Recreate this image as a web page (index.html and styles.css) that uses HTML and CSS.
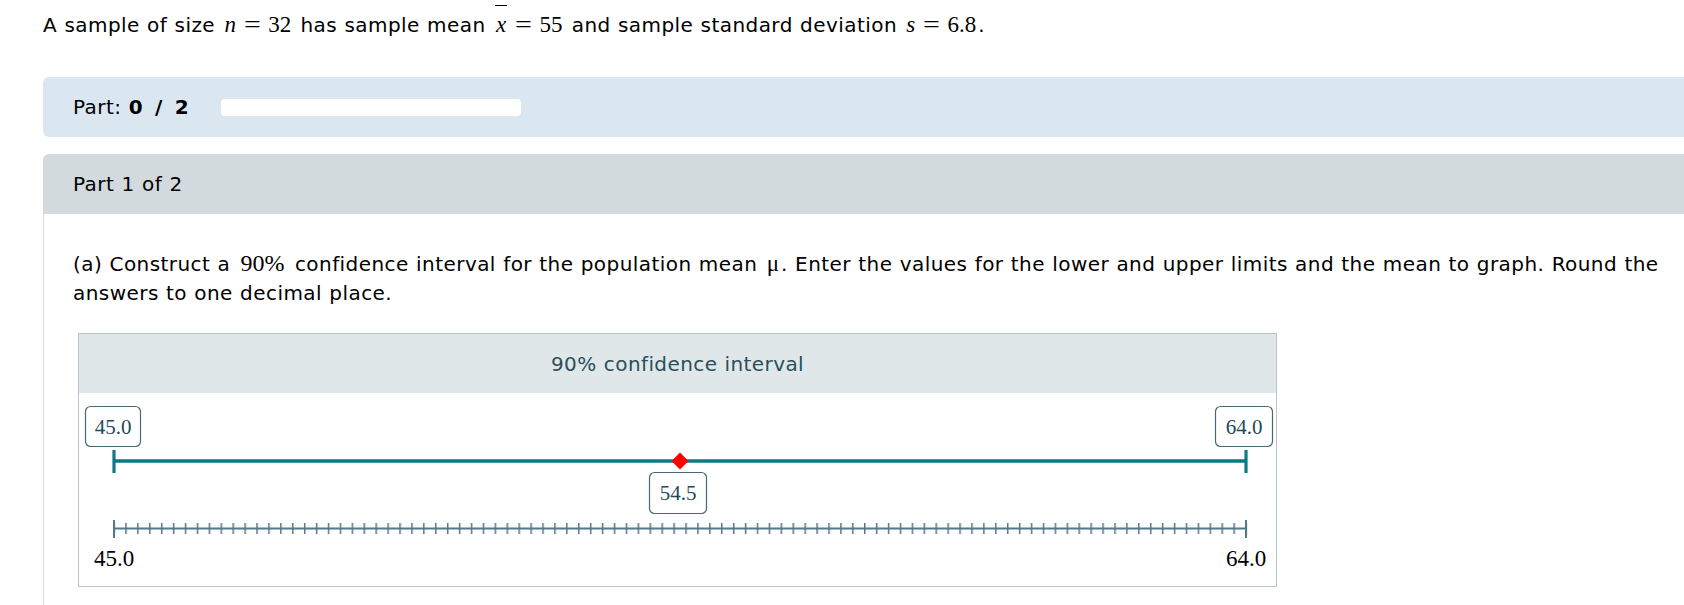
FILE: index.html
```html
<!DOCTYPE html>
<html lang="en">
<head>
<meta charset="utf-8">
<title>Confidence interval</title>
<link rel="stylesheet" href="styles.css">
</head>
<body>
<p class="problem">A sample of size <span class="m"><i>n</i><span class="eq">=</span>32</span> has sample mean <span class="m"><i class="bar">x</i><span class="eq">=</span>55</span> and sample standard deviation <span class="m"><i>s</i><span class="eq">=</span>6.8</span>.</p>

<div class="progress">
  <span class="progress-label">Part: <b>0 / 2</b></span>
  <span class="progress-track"></span>
</div>

<section class="part">
  <div class="part-header">Part 1 of 2</div>
  <div class="part-body">
    <p class="question">(a) Construct a <span class="m pct">90%</span> confidence interval for the population mean <span class="mu">μ</span>. Enter the values for the lower and upper limits and the mean to graph. Round the answers to one decimal place.</p>

    <div class="graph">
      <div class="graph-title">90% confidence interval</div>
      <svg class="graph-plot" width="1197" height="193" viewBox="0 0 1197 193">
        <defs>
          <pattern id="ticks" x="34.3" y="130" width="11.9158" height="11" patternUnits="userSpaceOnUse">
            <rect x="0" y="0" width="1.5" height="11" fill="#52788a"/>
          </pattern>
        </defs>
        <line x1="35" y1="68" x2="1167" y2="68" stroke="#0f7888" stroke-width="3.5"/>
        <line x1="35" y1="57" x2="35" y2="80" stroke="#0f7888" stroke-width="3.2"/>
        <line x1="1167" y1="57" x2="1167" y2="80" stroke="#0f7888" stroke-width="3.2"/>
        <polygon points="601,59.5 609.5,68 601,76.5 592.5,68" fill="#ff0000"/>
        <rect x="6.5" y="13.5" width="55" height="40" rx="5" fill="#fff" stroke="#456a77" stroke-width="1.2"/>
        <text x="34" y="41" class="box-text" text-anchor="middle">45.0</text>
        <rect x="1136.5" y="13.5" width="57" height="40" rx="5" fill="#fff" stroke="#456a77" stroke-width="1.2"/>
        <text x="1165" y="41" class="box-text" text-anchor="middle">64.0</text>
        <rect x="570.5" y="79.5" width="57" height="41" rx="5" fill="#fff" stroke="#456a77" stroke-width="1.2"/>
        <text x="599" y="107" class="box-text" text-anchor="middle">54.5</text>
        <line x1="35" y1="135.5" x2="1167" y2="135.5" stroke="#52788a" stroke-width="2.2"/>
        <rect x="34" y="130" width="1135" height="11" fill="url(#ticks)"/>
        <line x1="35" y1="127" x2="35" y2="145" stroke="#52788a" stroke-width="2"/>
        <line x1="1167" y1="127" x2="1167" y2="145" stroke="#52788a" stroke-width="2"/>
        <text x="35" y="173" class="axis-text" text-anchor="middle">45.0</text>
        <text x="1167" y="173" class="axis-text" text-anchor="middle">64.0</text>
      </svg>
    </div>
  </div>
</section>
</body>
</html>
```

FILE: styles.css
```css
html, body {
  margin: 0;
  padding: 0;
  background: #ffffff;
}

body {
  font-family: "DejaVu Sans", Verdana, sans-serif;
  font-size: 20px;
  letter-spacing: 0.44px;
  word-spacing: 0.5px;
  color: #000000;
  overflow: hidden;
}

.m, .mu {
  font-family: "Liberation Serif", "Times New Roman", serif;
  font-size: 23px;
  letter-spacing: 0;
  word-spacing: 0;
}

.m {
  margin: 0 2px;
}

.mu {
  margin: 0 2px;
}

.pct {
  font-size: 24px;
  margin: 0 3px;
}

.m i {
  font-style: italic;
}

.eq {
  display: inline-block;
  margin: 0 0.42em;
  transform: scaleX(1.3);
}

.bar {
  display: inline-block;
  border-top: 1.5px solid #000;
  padding: 9px 1px 0 1px;
  line-height: 20px;
}

.problem {
  margin: 0;
  padding: 5px 0 0 43px;
  line-height: 30px;
  height: 35px;
}

.progress {
  margin: 37px 0 0 43px;
  height: 60px;
  background: #dbe7f0;
  border-radius: 6px 0 0 6px;
  display: flex;
  align-items: center;
  padding-left: 30px;
}

.progress-label b {
  font-weight: bold;
  letter-spacing: 1.2px;
  word-spacing: 3px;
}

.progress-track {
  display: inline-block;
  width: 300px;
  height: 17px;
  margin-left: 31px;
  background: #ffffff;
  border-radius: 4px;
}

.part {
  margin: 17px 0 0 43px;
}

.part-header {
  height: 60px;
  background: #d2dadd;
  border-radius: 6px 0 0 0;
  display: flex;
  align-items: center;
  padding-left: 30px;
}

.part-body {
  border-left: 1px solid #d3dbde;
  padding: 35px 0 40px 29px;
}

.question {
  margin: 0;
  line-height: 29px;
}

.graph {
  margin: 25px 0 0 5px;
  width: 1197px;
  border: 1px solid #b8c6cb;
  background: #ffffff;
  letter-spacing: 0;
  word-spacing: 0;
}

.graph-title {
  height: 59px;
  background: #dfe7e9;
  color: #2a4f5b;
  letter-spacing: 0.4px;
  word-spacing: 0.5px;
  display: flex;
  align-items: center;
  justify-content: center;
}

.graph-plot {
  display: block;
}

.box-text {
  font-family: "Liberation Serif", "Times New Roman", serif;
  font-size: 21px;
  fill: #1d4b5a;
}

.axis-text {
  font-family: "Liberation Serif", "Times New Roman", serif;
  font-size: 23px;
  fill: #000000;
}
```
